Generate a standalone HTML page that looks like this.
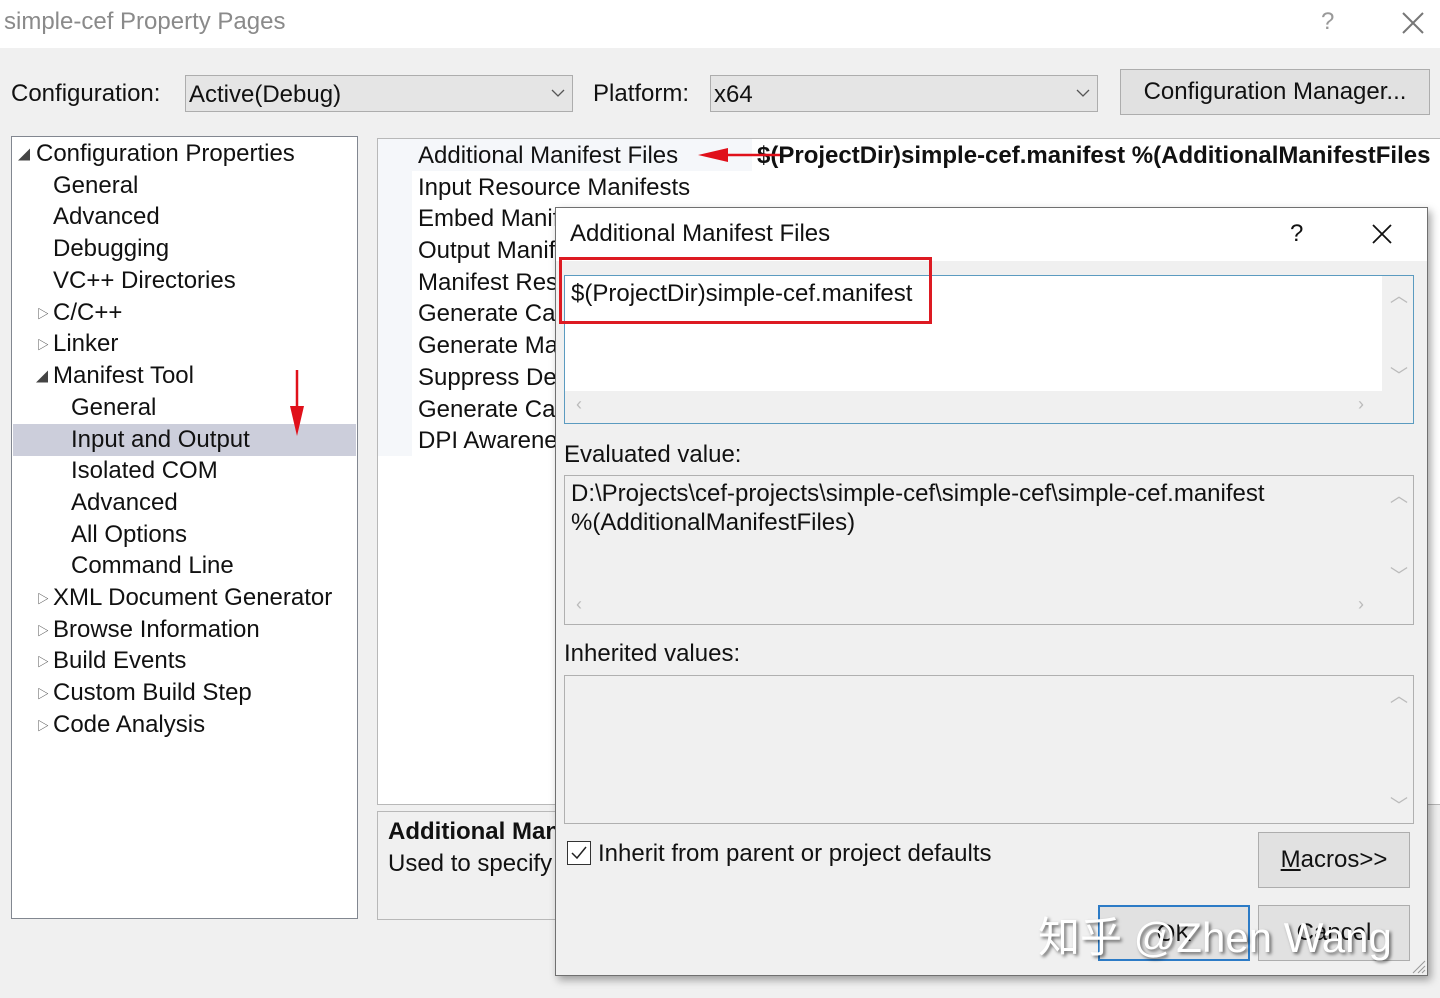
<!DOCTYPE html>
<html><head><meta charset="utf-8"><style>
*{box-sizing:border-box;margin:0;padding:0}
body{width:1440px;height:998px;background:#f0f0f0;position:relative;overflow:hidden;font-family:"Liberation Sans","Noto Sans CJK SC",sans-serif;font-size:24px;color:#111}
.a{position:absolute;white-space:nowrap}
.t{position:absolute;white-space:nowrap;line-height:32px;height:32px}
.box{position:absolute}
.btn{position:absolute;background:#e1e1e1;border:1px solid #adadad;text-align:center}
.combo{position:absolute;background:#e5e5e5;border:1px solid #adadad}
.tri{font-size:12px;color:#444;position:absolute}
</style></head><body>
<div class="box" style="left:0;top:0;width:1440px;height:48px;background:#fff"></div>
<div class="a" style="left:4px;top:8px;color:#8a8a8a;font-size:24px">simple-cef Property Pages</div>
<div class="a" style="left:1321px;top:8px;color:#999;font-size:24px">?</div>
<svg class="a" style="left:1402px;top:12px" width="22" height="22"><path d="M1 1L21 21M21 1L1 21" stroke="#777" stroke-width="2"/></svg>

<div class="a" style="left:11px;top:80px">Configuration:</div>
<div class="combo" style="left:185px;top:75px;width:388px;height:37px"></div>
<div class="a" style="left:189px;top:81px">Active(Debug)</div>
<svg class="a" style="left:551px;top:89px" width="14" height="9"><path d="M1 1L7 7L13 1" stroke="#555" fill="none" stroke-width="1.3"/></svg>
<div class="a" style="left:593px;top:80px">Platform:</div>
<div class="combo" style="left:710px;top:75px;width:388px;height:37px"></div>
<div class="a" style="left:714px;top:81px">x64</div>
<svg class="a" style="left:1076px;top:89px" width="14" height="9"><path d="M1 1L7 7L13 1" stroke="#555" fill="none" stroke-width="1.3"/></svg>
<div class="btn" style="left:1120px;top:69px;width:310px;height:46px;line-height:44px">Configuration Manager...</div>

<div class="box" style="left:11px;top:136px;width:347px;height:783px;background:#fff;border:1px solid #828790"></div>
<div class="box" style="left:13px;top:424px;width:343px;height:32px;background:#cccedb"></div>
<div class="tri" style="left:18px;top:146px">◢</div>
<div class="t" style="left:36px;top:138px">Configuration Properties</div>
<div class="t" style="left:53px;top:170px">General</div>
<div class="t" style="left:53px;top:201px">Advanced</div>
<div class="t" style="left:53px;top:233px">Debugging</div>
<div class="t" style="left:53px;top:265px">VC++ Directories</div>
<div class="tri" style="left:37px;top:305px">▷</div>
<div class="t" style="left:53px;top:297px">C/C++</div>
<div class="tri" style="left:37px;top:336px">▷</div>
<div class="t" style="left:53px;top:328px">Linker</div>
<div class="tri" style="left:36px;top:368px">◢</div>
<div class="t" style="left:53px;top:360px">Manifest Tool</div>
<div class="t" style="left:71px;top:392px">General</div>
<div class="t" style="left:71px;top:424px">Input and Output</div>
<div class="t" style="left:71px;top:455px">Isolated COM</div>
<div class="t" style="left:71px;top:487px">Advanced</div>
<div class="t" style="left:71px;top:519px">All Options</div>
<div class="t" style="left:71px;top:550px">Command Line</div>
<div class="tri" style="left:37px;top:590px">▷</div>
<div class="t" style="left:53px;top:582px">XML Document Generator</div>
<div class="tri" style="left:37px;top:622px">▷</div>
<div class="t" style="left:53px;top:614px">Browse Information</div>
<div class="tri" style="left:37px;top:653px">▷</div>
<div class="t" style="left:53px;top:645px">Build Events</div>
<div class="tri" style="left:37px;top:685px">▷</div>
<div class="t" style="left:53px;top:677px">Custom Build Step</div>
<div class="tri" style="left:37px;top:717px">▷</div>
<div class="t" style="left:53px;top:709px">Code Analysis</div>
<svg class="a" style="left:289px;top:370px" width="16" height="68"><path d="M8 0V50" stroke="#e0101a" stroke-width="2.5"/><path d="M1 36L8 66L15 36Z" fill="#e0101a"/></svg>

<div class="box" style="left:377px;top:138px;width:1070px;height:667px;background:#fff;border:1px solid #b8b8b8"></div>
<div class="box" style="left:378px;top:139px;width:34px;height:317px;background:#f5f7fa"></div>
<div class="box" style="left:412px;top:139px;width:340px;height:32px;background:#f5f7fa"></div>
<div class="t" style="left:418px;top:140px">Additional Manifest Files</div>
<div class="t" style="left:418px;top:172px">Input Resource Manifests</div>
<div class="t" style="left:418px;top:203px">Embed Manifest</div>
<div class="t" style="left:418px;top:235px">Output Manifest</div>
<div class="t" style="left:418px;top:267px">Manifest Resource</div>
<div class="t" style="left:418px;top:298px">Generate Catalog</div>
<div class="t" style="left:418px;top:330px">Generate Manifest</div>
<div class="t" style="left:418px;top:362px">Suppress Dependency</div>
<div class="t" style="left:418px;top:394px">Generate Catalog</div>
<div class="t" style="left:418px;top:425px">DPI Awareness</div>
<div class="t" style="left:757px;top:140px;font-weight:bold;width:673px;overflow:hidden">$(ProjectDir)simple-cef.manifest %(AdditionalManifestFiles)</div>
<svg class="a" style="left:698px;top:146px" width="82" height="18"><path d="M20 9H82" stroke="#e0101a" stroke-width="2.5"/><path d="M0 9L30 2L30 16Z" fill="#e0101a"/></svg>
<div class="box" style="left:377px;top:811px;width:300px;height:109px;border:1px solid #b8b8b8"></div>
<div class="a" style="left:388px;top:818px;font-weight:bold">Additional Manifest Files</div>
<div class="a" style="left:388px;top:850px">Used to specify additional</div>

<div class="box" style="left:555px;top:207px;width:873px;height:769px;background:#f0f0f0;border:1px solid #707070;box-shadow:3px 4px 8px rgba(0,0,0,.35)"></div>
<div class="box" style="left:556px;top:208px;width:871px;height:53px;background:#fff"></div>
<div class="a" style="left:570px;top:220px">Additional Manifest Files</div>
<div class="a" style="left:1290px;top:220px;font-size:24px">?</div>
<svg class="a" style="left:1372px;top:224px" width="20" height="20"><path d="M1 1L19 19M19 1L1 19" stroke="#111" stroke-width="1.8"/></svg>

<div class="box" style="left:564px;top:275px;width:850px;height:149px;border:1px solid #5b9bc0;background:#f0f0f0"></div>
<div class="box" style="left:565px;top:276px;width:817px;height:115px;background:#fff"></div>
<div class="a" style="left:571px;top:280px">$(ProjectDir)simple-cef.manifest</div>
<div class="box" style="left:559px;top:257px;width:373px;height:67px;border:3px solid #dd1a22"></div>
<div class="a" style="left:1390px;top:282px;color:#bbb;font-size:18px">︿</div>
<div class="a" style="left:1390px;top:362px;color:#bbb;font-size:18px">﹀</div>
<div class="a" style="left:576px;top:394px;color:#bbb;font-size:18px">‹</div>
<div class="a" style="left:1358px;top:394px;color:#bbb;font-size:18px">›</div>

<div class="a" style="left:564px;top:441px">Evaluated value:</div>
<div class="box" style="left:564px;top:475px;width:850px;height:150px;border:1px solid #b0b0b0"></div>
<div class="a" style="left:571px;top:480px">D:\Projects\cef-projects\simple-cef\simple-cef\simple-cef.manifest</div>
<div class="a" style="left:571px;top:509px">%(AdditionalManifestFiles)</div>
<div class="a" style="left:1390px;top:482px;color:#bbb;font-size:18px">︿</div>
<div class="a" style="left:1390px;top:562px;color:#bbb;font-size:18px">﹀</div>
<div class="a" style="left:576px;top:594px;color:#bbb;font-size:18px">‹</div>
<div class="a" style="left:1358px;top:594px;color:#bbb;font-size:18px">›</div>

<div class="a" style="left:564px;top:640px">Inherited values:</div>
<div class="box" style="left:564px;top:675px;width:850px;height:149px;border:1px solid #b0b0b0"></div>
<div class="a" style="left:1390px;top:682px;color:#bbb;font-size:18px">︿</div>
<div class="a" style="left:1390px;top:792px;color:#bbb;font-size:18px">﹀</div>

<div class="box" style="left:567px;top:841px;width:24px;height:24px;border:1px solid #333;background:#fff"></div>
<svg class="a" style="left:570px;top:845px" width="18" height="16"><path d="M2 8L7 13L16 2" stroke="#222" fill="none" stroke-width="1.5"/></svg>
<div class="a" style="left:598px;top:840px">Inherit from parent or project defaults</div>
<div class="btn" style="left:1258px;top:832px;width:152px;height:56px;line-height:54px"><u>M</u>acros&gt;&gt;</div>
<div class="btn" style="left:1098px;top:905px;width:152px;height:56px;line-height:54px;border:2px solid #2c7bc6">OK</div>
<div class="btn" style="left:1258px;top:905px;width:152px;height:56px;line-height:54px">Cancel</div>
<svg class="a" style="left:1410px;top:958px" width="16" height="16"><path d="M15 3L3 15M15 8L8 15M15 12L12 15" stroke="#999" stroke-width="1"/></svg>
<div class="a" style="left:1038px;top:904px;font-size:42px;color:#fff;text-shadow:2px 2px 3px rgba(0,0,0,.55)">知乎 @Zhen Wang</div>
</body></html>
